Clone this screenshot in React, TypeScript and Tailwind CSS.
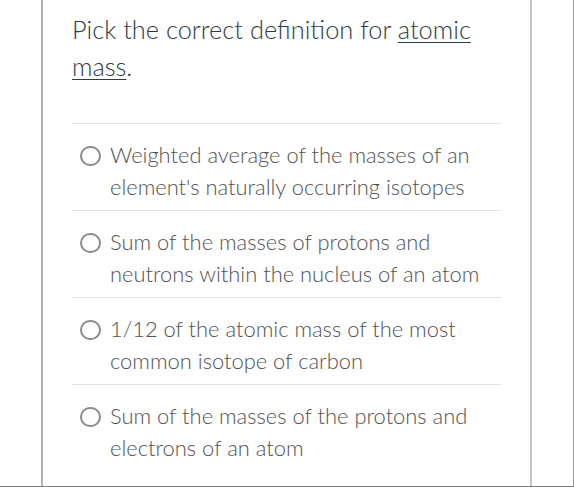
const options = [
  "Weighted average of the masses of an element's naturally occurring isotopes",
  "Sum of the masses of protons and neutrons within the nucleus of an atom",
  "1/12 of the atomic mass of the most common isotope of carbon",
  "Sum of the masses of the protons and electrons of an atom",
];

export default function App() {
  return (
    <div className="h-[487px] w-[574px] bg-white font-['Lato',sans-serif] font-light flex border-r border-b border-r-[#9a9a9a] border-b-[#7a7a7a]">
      <div className="ml-[41px] w-[491px] h-full border-l-2 border-r-2 border-l-[#b3b3b3] border-r-[#c6c6c6] pl-[29px] pr-[29px] pt-[11px]">
        <p className="text-[25.4px] leading-[36.5px] text-[#2d3b45]">
          Pick the correct definition for{" "}
          <span className="underline underline-offset-[3px] decoration-1">atomic mass</span>.
        </p>
        <div className="mt-[39px] border-t border-[#e2e2e2]">
          {options.map((o, i) => (
            <label
              key={i}
              className={`flex items-start pt-[15px] pb-[7px] ${i < options.length - 1 ? "border-b border-[#e2e2e2]" : ""}`}
            >
              <span className="mt-[7px] ml-[8px] mr-[9px] w-[21px] h-[20px] rounded-full border-2 border-[#8b8b8b] shrink-0" />
              <span className="text-[21.9px] leading-[32px] text-[#525252]">{o}</span>
            </label>
          ))}
        </div>
      </div>
    </div>
  );
}
